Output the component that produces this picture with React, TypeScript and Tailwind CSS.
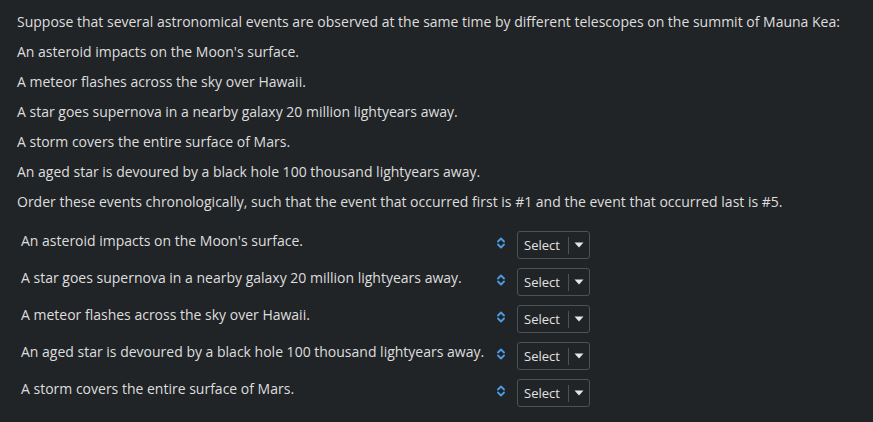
const paragraphs = [
  "Suppose that several astronomical events are observed at the same time by different telescopes on the summit of Mauna Kea:",
  "An asteroid impacts on the Moon's surface.",
  "A meteor flashes across the sky over Hawaii.",
  "A star goes supernova in a nearby galaxy 20 million lightyears away.",
  "A storm covers the entire surface of Mars.",
  "An aged star is devoured by a black hole 100 thousand lightyears away.",
  "Order these events chronologically, such that the event that occurred first is #1 and the event that occurred last is #5.",
];

const items = [
  "An asteroid impacts on the Moon's surface.",
  "A star goes supernova in a nearby galaxy 20 million lightyears away.",
  "A meteor flashes across the sky over Hawaii.",
  "An aged star is devoured by a black hole 100 thousand lightyears away.",
  "A storm covers the entire surface of Mars.",
];

function SortIcon() {
  return (
    <svg width="8" height="12" viewBox="0 0 8 12" fill="none" stroke="#4c9be8" strokeWidth="1.8" strokeLinecap="round" strokeLinejoin="round">
      <path d="M1 4.5 L4 1.5 L7 4.5" />
      <path d="M1 7.5 L4 10.5 L7 7.5" />
    </svg>
  );
}

function SelectBox() {
  return (
    <div className="flex h-[28px] w-[73px] items-center rounded-[3px] border border-[#4e5155] bg-[#212427]">
      <span className="pl-[6px] text-[13px] leading-none text-[#e2e2e2]">Select</span>
      <span className="ml-auto h-[17px] w-px bg-[#4e5155]" />
      <svg className="mx-[5px]" width="10" height="6" viewBox="0 0 10 6">
        <path d="M0.5 0.5 H9.5 L5 5.5 Z" fill="#e6e6e6" />
      </svg>
    </div>
  );
}

export default function App() {
  return (
    <div className="min-h-[422px] bg-[#212427] pl-[17px] pt-[12px] text-[14px] text-[#dedede]" style={{ fontFamily: '"Open Sans", "Noto Sans", sans-serif' }}>
      {paragraphs.map((p) => (
        <p key={p} className="mb-[10px] leading-[20px]">
          {p}
        </p>
      ))}
      <div className="flex flex-col pl-[4px] pt-[5px]">
        {items.map((item) => (
          <div key={item} className="flex h-[37px] items-start">
            <div className="w-[469px] pt-[4px] leading-[20px]">{item}</div>
            <div className="flex w-[21px] justify-center pt-[10px]">
              <SortIcon />
            </div>
            <div className="ml-[6px] pt-[4px]">
              <SelectBox />
            </div>
          </div>
        ))}
      </div>
    </div>
  );
}
